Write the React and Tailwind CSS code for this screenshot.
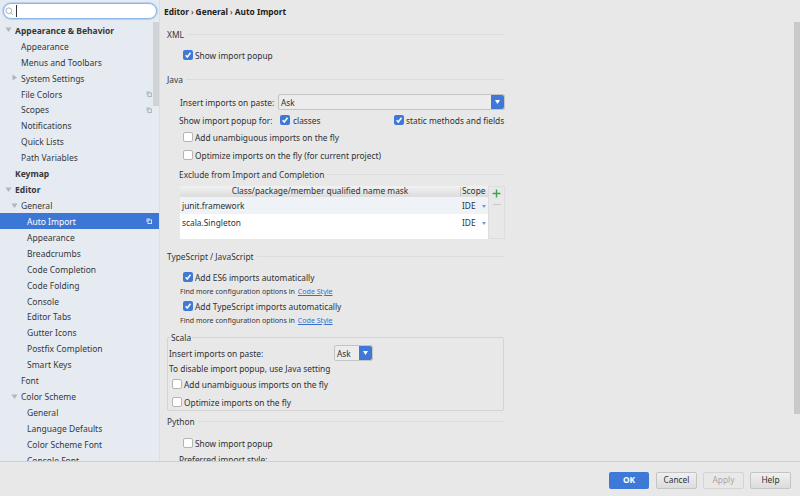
import React from "react";

function Arrow({ dir }) {
  return (
    <svg width="7" height="7" viewBox="0 0 7 7" className="block">
      {dir === "down" ? <path d="M0.5 1.5H6.5L3.5 6Z" fill="#b0b6bc" /> : <path d="M1.5 0.5V6.5L6 3.5Z" fill="#b0b6bc" />}
    </svg>
  );
}

function CopyIcon({ active }) {
  const c = active ? "#cfe0f7" : "#a8b8c4";
  return (
    <svg width="6" height="6" viewBox="0 0 6 6" className="block">
      <path d="M0.5 0.5H4V1.5H1.5V4H0.5Z" fill={c} />
      <rect x="2" y="2" width="3.5" height="3.5" fill="none" stroke={c} />
    </svg>
  );
}

const tree = [
  { t: "Appearance & Behavior", l: 0, b: 1, a: "down" },
  { t: "Appearance", l: 1 },
  { t: "Menus and Toolbars", l: 1 },
  { t: "System Settings", l: 1, a: "right" },
  { t: "File Colors", l: 1, c: 1 },
  { t: "Scopes", l: 1, c: 1 },
  { t: "Notifications", l: 1 },
  { t: "Quick Lists", l: 1 },
  { t: "Path Variables", l: 1 },
  { t: "Keymap", l: 0, b: 1 },
  { t: "Editor", l: 0, b: 1, a: "down" },
  { t: "General", l: 1, a: "down" },
  { t: "Auto Import", l: 2, c: 1, s: 1 },
  { t: "Appearance", l: 2 },
  { t: "Breadcrumbs", l: 2 },
  { t: "Code Completion", l: 2 },
  { t: "Code Folding", l: 2 },
  { t: "Console", l: 2 },
  { t: "Editor Tabs", l: 2 },
  { t: "Gutter Icons", l: 2 },
  { t: "Postfix Completion", l: 2 },
  { t: "Smart Keys", l: 2 },
  { t: "Font", l: 1 },
  { t: "Color Scheme", l: 1, a: "down" },
  { t: "General", l: 2 },
  { t: "Language Defaults", l: 2 },
  { t: "Color Scheme Font", l: 2 },
  { t: "Console Font", l: 2 },
];

const levelPad = ["pl-[15px]", "pl-[21px]", "pl-[27px]"];
const arrowLeft = ["left-[5px]", "left-[11px]", "left-[17px]"];

function TreeRow({ r }) {
  return (
    <div
      className={`relative flex h-[15.93px] shrink-0 items-center whitespace-nowrap pt-[1.5px] leading-none ${levelPad[r.l]} ${r.s ? "bg-[#3d77d6] text-white" : "text-[#35383b]"} ${r.b ? "font-bold" : ""}`}
    >
      {r.a && (
        <span className={`absolute top-[4px] ${arrowLeft[r.l]}`}>
          <Arrow dir={r.a} />
        </span>
      )}
      <span>{r.t}</span>
      {r.c && (
        <span className="absolute left-[146px] top-[5px]">
          <CopyIcon active={r.s} />
        </span>
      )}
    </div>
  );
}

function Check({ on }) {
  return on ? (
    <span className="flex h-[10px] w-[10px] shrink-0 items-center justify-center rounded-[2px] bg-[#3f79d8]">
      <svg width="8" height="8" viewBox="0 0 8 8" className="block">
        <path d="M1.6 4.2L3.3 6L6.5 1.8" fill="none" stroke="#fff" strokeWidth="1.5" />
      </svg>
    </span>
  ) : (
    <span className="h-[10px] w-[10px] shrink-0 rounded-[2px] border border-[#b5b5b5] bg-white" />
  );
}

function CheckRow({ on, label, h, cls }) {
  return (
    <div className={`flex items-center gap-[2px] whitespace-nowrap leading-none ${h} ${cls}`}>
      <Check on={on} />
      <span className="pt-[2px]">{label}</span>
    </div>
  );
}

function Section({ title, cls, line = "ml-[3px]" }) {
  return (
    <div className={`flex items-center whitespace-nowrap leading-none text-[#33363a] ${cls}`}>
      <span className="pt-[2px]">{title}</span>
      <div className={`h-px flex-1 bg-[#dcdcdc] ${line}`} />
    </div>
  );
}

function ComboArrow() {
  return (
    <span className="flex h-full w-[13px] items-center justify-center rounded-r-[2px] bg-[#3f79d8]">
      <svg width="5" height="4" viewBox="0 0 5 4" className="block">
        <path d="M0 0H5L2.5 4Z" fill="#fff" />
      </svg>
    </span>
  );
}

function FindMore() {
  return (
    <div className="ml-[20px] flex h-[14px] items-center whitespace-nowrap pt-[1px] text-[7.05px] leading-none text-[#33363a]">
      <span>Find more configuration options in</span>
      <span className="ml-[3px] text-[#3a6fd0] underline">Code Style</span>
    </div>
  );
}

function Btn({ label, cls, w }) {
  return (
    <div className={`flex h-[17px] items-center justify-center rounded-[2px] leading-none ${w} ${cls}`}>{label}</div>
  );
}

function ScopeCell() {
  return (
    <div className="flex w-[28px] items-center justify-between pl-[2px] pr-[2px]">
      <span>IDE</span>
      <svg width="4" height="3" viewBox="0 0 4 3" className="block">
        <path d="M0 0H4L2 3Z" fill="#6f9ad8" />
      </svg>
    </div>
  );
}

export default function App() {
  return (
    <div
      className="flex h-[496px] w-[800px] flex-col overflow-hidden bg-[#e8e8e8] text-[8.35px] text-[#2f3134]"
      style={{ fontFamily: '"Noto Sans", sans-serif' }}
    >
      <div className="flex h-[461px] shrink-0 overflow-hidden">
        {/* Sidebar */}
        <div className="relative flex h-full w-[160px] shrink-0 flex-col overflow-hidden border-r border-[#dcdfe2] bg-[#e6ebf1] text-[8.5px]">
          <div className="flex h-[22.4px] shrink-0 items-start pl-[3px] pt-[3px]">
            <div className="flex h-[16px] w-[154px] items-center rounded-[8px] border border-[#8fb6e6] bg-white pl-[1px] shadow-[0_0_1px_1px_#b5d0f0]">
              <svg width="9" height="9" viewBox="0 0 10 10" className="block shrink-0">
                <circle cx="4.2" cy="4.2" r="3.2" fill="none" stroke="#a4a9ae" />
                <path d="M6.6 6.6L9 9" stroke="#a4a9ae" />
              </svg>
              <span className="ml-[2px] h-[12px] w-px bg-[#333]" />
            </div>
          </div>
          {tree.map((r, i) => (
            <TreeRow key={i} r={r} />
          ))}
          <div className="absolute left-[153px] top-[22px] h-[84px] w-[6px] bg-[#d0d3d6]" />
        </div>

        {/* Main */}
        <div className="relative min-w-0 flex-1 overflow-hidden bg-[#e8e8e8]">
          <div className="flex h-[22px] items-center gap-[2px] pl-[4px] pt-[2px] font-bold leading-none text-[#1f2022]">
            <span>Editor</span><span className="font-normal">›</span><span>General</span><span className="font-normal">›</span><span>Auto Import</span>
          </div>

          <div className="w-[345px]">
            <Section title="XML" cls="ml-[7px] mt-[5px] h-[14px]" />
            <CheckRow on label="Show import popup" h="h-[14px]" cls="ml-[23px] mt-[7px]" />
            <Section title="Java" cls="ml-[7px] mt-[10px] h-[14px]" />

            <div className="ml-[20px] mt-[8px] flex h-[16px] items-center whitespace-nowrap leading-none">
              <span className="w-[98px] pt-[2px]">Insert imports on paste:</span>
              <div className="flex h-[16px] flex-1 items-center rounded-[2px] border border-[#c4c4c4] bg-[#ececec] pl-[2px]">
                <span className="flex-1 pt-[2px]">Ask</span>
                <ComboArrow />
              </div>
            </div>

            <div className="ml-[19px] mt-[2px] flex h-[16px] items-center whitespace-nowrap leading-none">
              <span className="w-[101px] pt-[2px]">Show import popup for:</span>
              <Check on />
              <span className="ml-[3px] w-[101px] pt-[2px]">classes</span>
              <Check on />
              <span className="ml-[2px] pt-[2px]">static methods and fields</span>
            </div>

            <CheckRow label="Add unambiguous imports on the fly" h="h-[18px]" cls="ml-[23px]" />
            <CheckRow label="Optimize imports on the fly (for current project)" h="h-[18px]" cls="ml-[23px]" />

            <Section title="Exclude from Import and Completion" cls="ml-[19px] mt-[3px] h-[14px]" />

            <div className="ml-[20px] mt-[5px] flex h-[53px] overflow-hidden whitespace-nowrap leading-none">
              <div className="flex min-w-0 flex-1 flex-col bg-white">
                <div className="flex h-[11px] shrink-0 items-center bg-gradient-to-b from-[#f2f2f2] to-[#dcdcdc] text-[#2f3134]">
                  <div className="flex-1 text-center">Class/package/member qualified name mask</div>
                  <div className="w-[28px] border-l border-[#c8c8c8] pl-[1px]">Scope</div>
                </div>
                <div className="flex h-[17px] shrink-0 items-center bg-[#eff3f7] pt-[1px]">
                  <div className="flex-1 pl-[2px]">junit.framework</div>
                  <ScopeCell />
                </div>
                <div className="flex h-[16px] shrink-0 items-center bg-white pt-[2px]">
                  <div className="flex-1 pl-[2px]">scala.Singleton</div>
                  <ScopeCell />
                </div>
              </div>
              <div className="flex w-[17px] shrink-0 flex-col items-center border border-[#dddddd] bg-[#e8e8e8] pt-[2px]">
                <svg width="9" height="9" viewBox="0 0 9 9" className="block">
                  <path d="M4.5 0.5V8.5M0.5 4.5H8.5" stroke="#44a04f" strokeWidth="1.4" />
                </svg>
                <span className="mt-[6px] h-px w-[8px] bg-[#c8c8c8]" />
              </div>
            </div>

            <Section title="TypeScript / JavaScript" cls="ml-[7px] mt-[10px] h-[14px]" />
            <CheckRow on label="Add ES6 imports automatically" h="h-[14px]" cls="ml-[23px] mt-[7px]" />
            <FindMore />
            <CheckRow on label="Add TypeScript imports automatically" h="h-[14px]" cls="ml-[23px] mt-[1px]" />
            <FindMore />

            {/* Scala */}
            <div className="relative ml-[7px] mt-[10px] h-[74px] w-[337px] whitespace-nowrap rounded-[2px] border border-[#d4d4d4]">
              <span className="absolute left-[2px] top-[-4px] bg-[#e8e8e8] px-px leading-none">Scala</span>
              <div className="ml-[1px] mt-[7px] flex h-[16px] items-center leading-none">
                <span className="w-[165px] pt-[2px]">Insert imports on paste:</span>
                <div className="flex h-[16px] w-[39px] items-center rounded-[2px] border border-[#c4c4c4] bg-[#ececec] pl-[2px]">
                  <span className="flex-1 pt-[2px]">Ask</span>
                  <ComboArrow />
                </div>
              </div>
              <div className="ml-[1px] flex h-[16px] items-center pt-[1px] leading-none">To disable import popup, use Java setting</div>
              <CheckRow label="Add unambiguous imports on the fly" h="h-[14px]" cls="ml-[4px]" />
              <CheckRow label="Optimize imports on the fly" h="h-[18px]" cls="ml-[4px] mt-[2px]" />
            </div>

            <Section title="Python" cls="ml-[7px] mt-[3px] h-[14px]" />
            <CheckRow label="Show import popup" h="h-[14px]" cls="ml-[23px] mt-[8px]" />
            <div className="ml-[19px] mt-[2px] flex h-[14px] items-center pt-[2px] leading-none">Preferred import style:</div>
          </div>

          <div className="absolute right-0 top-[22px] h-[392px] w-[6px] bg-[#c9c9c9]" />
        </div>
      </div>

      {/* Footer */}
      <div className="flex h-[35px] shrink-0 items-start justify-end gap-[6px] border-t border-[#cfcfcf] pr-[9px] pt-[10px]">
        <Btn label="OK" w="w-[40px] mr-[1px]" cls="bg-[#3f79d8] font-bold text-white" />
        <Btn label="Cancel" w="w-[41px]" cls="border border-[#c4c4c4] bg-gradient-to-b from-[#f0f0f0] to-[#dcdcdc]" />
        <Btn label="Apply" w="w-[41px]" cls="border border-[#d4d4d4] text-[#a6a6a6]" />
        <Btn label="Help" w="w-[41px]" cls="border border-[#c4c4c4] bg-gradient-to-b from-[#f0f0f0] to-[#dcdcdc]" />
      </div>
    </div>
  );
}
